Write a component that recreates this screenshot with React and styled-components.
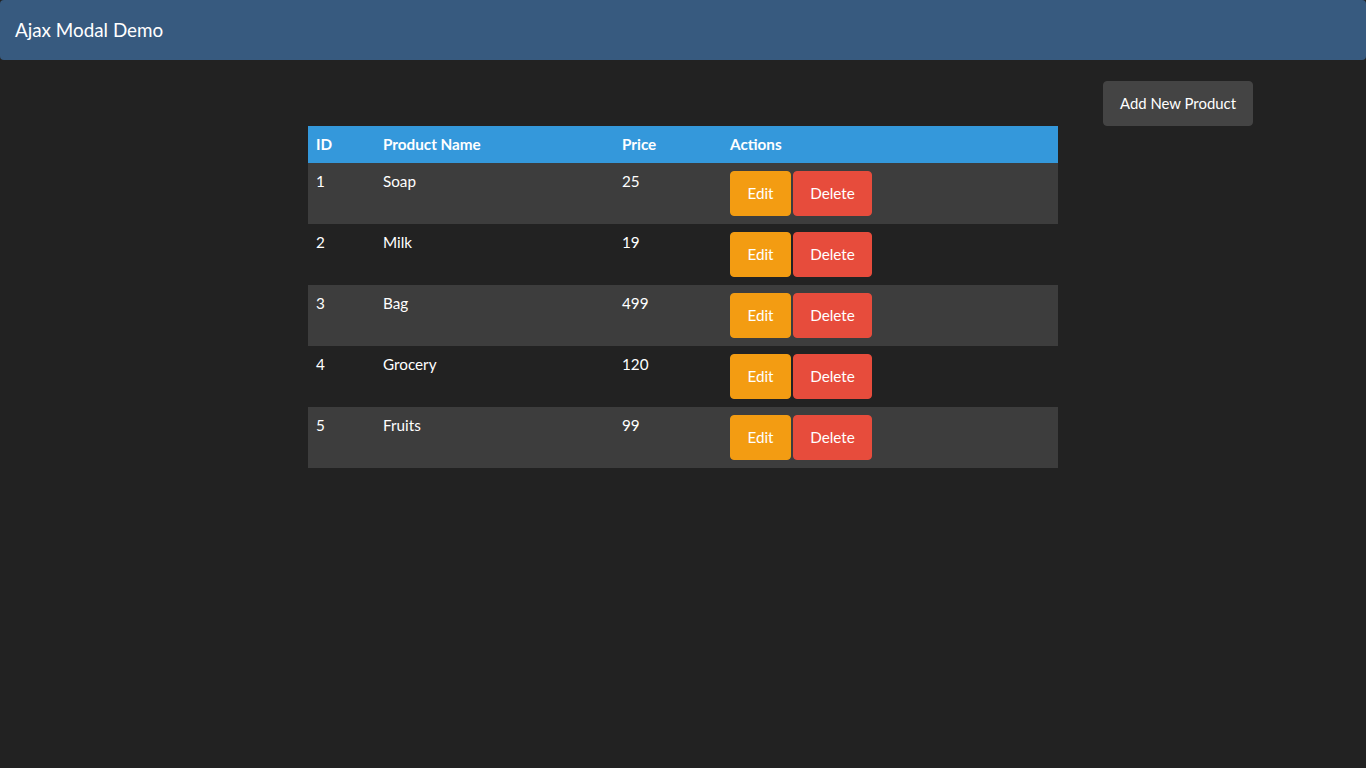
import React from 'react';
import styled, { createGlobalStyle } from 'styled-components';

const products = [
  { id: 1, name: 'Soap', price: 25 },
  { id: 2, name: 'Milk', price: 19 },
  { id: 3, name: 'Bag', price: 499 },
  { id: 4, name: 'Grocery', price: 120 },
  { id: 5, name: 'Fruits', price: 99 },
];

const GlobalStyle = createGlobalStyle`
  * {
    box-sizing: border-box;
  }

  html,
  body {
    margin: 0;
    min-height: 100%;
    background: #222222;
  }

  body {
    color: #ffffff;
    font-family: Lato, 'Liberation Sans', sans-serif;
    font-size: 15px;
    line-height: 1.42857143;
  }
`;

const Page = styled.div`
  min-height: 768px;
  background: #222222;
`;

const Navbar = styled.nav`
  display: flex;
  align-items: center;
  height: 60px;
  padding: 0 15px 1px;
  background: #375a7f;
  border-radius: 4px;
`;

const Brand = styled.a`
  color: #ffffff;
  font-size: 18.85px;
  line-height: 21px;
`;

const Container = styled.main`
  width: 1170px;
  margin: 0 auto;
  padding: 21px 15px 0;
`;

const Toolbar = styled.div`
  display: flex;
  justify-content: flex-end;
`;

const Button = styled.button`
  height: 45px;
  padding: 0 16px;
  border: 1px solid ${(props) => props.$color};
  border-radius: 4px;
  background: ${(props) => props.$color};
  color: #ffffff;
  font: inherit;
`;

const AddButton = styled(Button)`
  font-size: 14.9px;
`;

const RowButton = styled(Button)`
  width: ${(props) => props.$width}px;
  padding: 0;
`;

const ProductTable = styled.table`
  width: 750px;
  margin: 0 auto;
  border-collapse: collapse;
  table-layout: fixed;
  font-size: 15.25px;
`;

const HeadRow = styled.tr`
  background: #3498db;
`;

const HeadCell = styled.th`
  width: ${(props) => props.$width}px;
  height: 37px;
  padding: 8px;
  font-weight: 700;
  line-height: 21px;
  text-align: left;
  vertical-align: top;
`;

const Row = styled.tr`
  background: ${(props) => (props.$striped ? '#3d3d3d' : 'transparent')};
`;

const Cell = styled.td`
  height: 61px;
  padding: 8px;
  line-height: 21px;
  vertical-align: top;
`;

const Actions = styled.div`
  display: flex;
  gap: 2px;
`;

export default function App() {
  return (
    <Page>
      <GlobalStyle />
      <Navbar>
        <Brand>Ajax Modal Demo</Brand>
      </Navbar>
      <Container>
        <Toolbar>
          <AddButton $color="#444444">Add New Product</AddButton>
        </Toolbar>
        <ProductTable>
          <thead>
            <HeadRow>
              <HeadCell $width={67}>ID</HeadCell>
              <HeadCell $width={239}>Product Name</HeadCell>
              <HeadCell $width={108}>Price</HeadCell>
              <HeadCell $width={336}>Actions</HeadCell>
            </HeadRow>
          </thead>
          <tbody>
            {products.map((row, i) => (
              <Row key={row.id} $striped={i % 2 === 0}>
                <Cell>{row.id}</Cell>
                <Cell>{row.name}</Cell>
                <Cell>{row.price}</Cell>
                <Cell>
                  <Actions>
                    <RowButton $color="#f39c12" $width={61}>Edit</RowButton>
                    <RowButton $color="#e74c3c" $width={79}>Delete</RowButton>
                  </Actions>
                </Cell>
              </Row>
            ))}
          </tbody>
        </ProductTable>
      </Container>
    </Page>
  );
}
